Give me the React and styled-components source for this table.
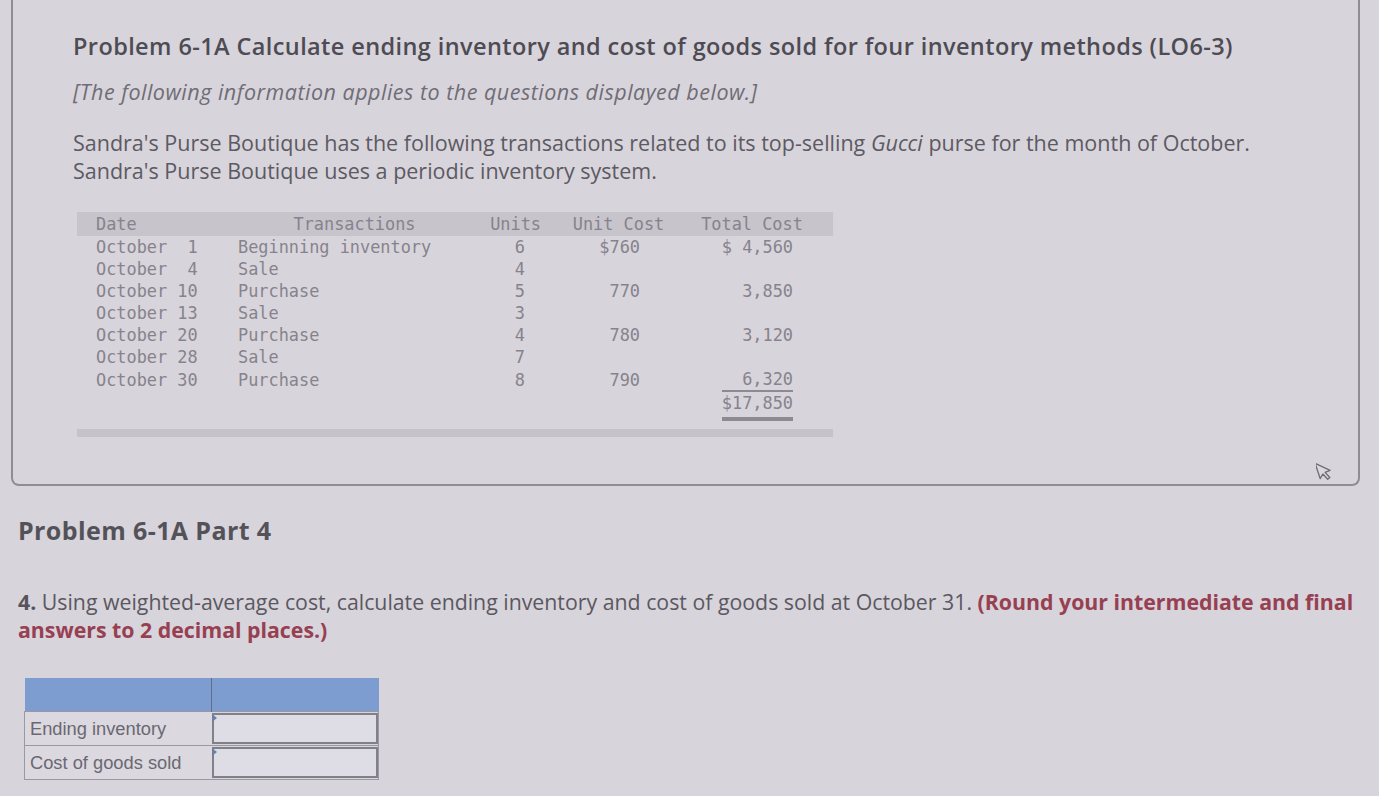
import React from "react";
import styled, { createGlobalStyle } from "styled-components";

const Global = createGlobalStyle`
  html, body { margin: 0; padding: 0; }
  body {
    background: #d8d4dc;
    font-family: "Open Sans", Lato, sans-serif;
    color: #56545b;
  }
`;

const Page = styled.div`
  width: 1379px;
  height: 796px;
  overflow: hidden;
  display: flex;
  flex-direction: column;
  align-items: flex-start;
`;

const InfoBox = styled.section`
  position: relative;
  align-self: stretch;
  margin: 0 19px 0 11px;
  height: 486px;
  box-sizing: border-box;
  border: 2px solid #8e8c94;
  border-top: none;
  border-radius: 0 0 8px 8px;
  padding: 30px 0 0 60px;
`;

const Title = styled.h1`
  margin: 0;
  font-size: 23.5px;
  line-height: 32px;
  font-weight: 600;
  letter-spacing: 0.4px;
  color: #4d4b53;
`;

const Note = styled.p`
  margin: 16px 0 0;
  font-size: 21.5px;
  line-height: 28px;
  letter-spacing: 0.5px;
  font-style: italic;
  color: #6f6d75;
`;

const Para = styled.p`
  margin: 23px 0 0;
  font-size: 21.5px;
  line-height: 28px;
  color: #5c5a62;
`;

const DataTable = styled.div`
  margin: 27px 0 0 4px;
  width: 756px;
  font-family: "DejaVu Sans Mono", "Liberation Mono", monospace;
  font-size: 16.9px;
  color: #86838c;
`;

const Row = styled.div`
  display: grid;
  grid-template-columns: 19px 142px 233px 85px 125px 152px;
  min-height: ${(p) => p.$h || 22}px;
  align-items: center;
  background: ${(p) => (p.$head ? "#c8c4cc" : "transparent")};
  white-space: pre;
`;

const Cell = styled.div`
  text-align: ${(p) => p.$align || "left"};
  padding-right: ${(p) => p.$pr || 0}px;
`;

const Amount = styled.span`
  display: inline-block;
  min-width: 7ch;
  text-align: right;
  line-height: 22px;
  padding-bottom: ${(p) => (p.$line === 4 ? 3 : 0)}px;
  border-bottom: ${(p) => (p.$line ? `${p.$line}px solid #8d8a93` : "none")};
`;

const BottomBar = styled.div`
  margin-top: 8px;
  height: 8px;
  background: #c6c2ca;
`;

const Cursor = styled.svg`
  position: absolute;
  right: 26px;
  bottom: 2px;
`;

const PartTitle = styled.h2`
  margin: 28px 0 0 18px;
  font-size: 25px;
  line-height: 32px;
  font-weight: 700;
  letter-spacing: 0.4px;
  color: #545259;
`;

const Question = styled.p`
  margin: 42px 0 0 18px;
  font-size: 21.3px;
  line-height: 28px;
  color: #5a5860;
  white-space: nowrap;
`;

const Strong = styled.b`
  font-weight: 700;
  color: ${(p) => (p.$accent ? "#964052" : "#56545b")};
`;

const AnswerTable = styled.table`
  margin: 34px 0 0 24px;
  width: 354px;
  table-layout: fixed;
  border-collapse: collapse;
  font-family: "Liberation Sans", Arial, sans-serif;
  font-size: 18.3px;
  color: #6a6870;
`;

const HeadCell = styled.th`
  background: #7d9dd0;
  height: 33px;
  padding: 0;
  border-left: ${(p) => (p.$divider ? "1px solid #5e6f8a" : "none")};
`;

const LabelCell = styled.td`
  height: 31px;
  padding: 0 0 0 5px;
  border: 1px solid #9a98a0;
  border-right: none;
  background: #dbd8e0;
  white-space: nowrap;
  overflow: hidden;
`;

const InputCell = styled.td`
  padding: 0;
  border: 1px solid #9a98a0;
  border-left: none;
  position: relative;
`;

const InputBox = styled.div`
  height: 27px;
  margin: 1px 0;
  border: 2px solid #7f8088;
  background: #dedce4;
`;

const Marker = styled.span`
  position: absolute;
  left: 0;
  top: 2px;
  width: 0;
  height: 0;
  border-top: 4px solid transparent;
  border-bottom: 4px solid transparent;
  border-left: 5px solid #6c7fa6;
`;

const rows = [
  ["October  1", "Beginning inventory", "6", "$760", "$ 4,560"],
  ["October  4", "Sale", "4", "", ""],
  ["October 10", "Purchase", "5", "770", "3,850"],
  ["October 13", "Sale", "3", "", ""],
  ["October 20", "Purchase", "4", "780", "3,120"],
  ["October 28", "Sale", "7", "", ""],
  ["October 30", "Purchase", "8", "790", "6,320"],
];

export default function App() {
  return (
    <Page>
      <Global />
      <InfoBox>
        <Title>
          Problem 6-1A Calculate ending inventory and cost of goods sold for four inventory methods (LO6-3)
        </Title>
        <Note>[The following information applies to the questions displayed below.]</Note>
        <Para>
          Sandra's Purse Boutique has the following transactions related to its top-selling <i>Gucci</i> purse for
          the month of October.
          <br />
          Sandra's Purse Boutique uses a periodic inventory system.
        </Para>
        <DataTable>
          <Row $head $h={24}>
            <Cell />
            <Cell>Date</Cell>
            <Cell $align="center">Transactions</Cell>
            <Cell $align="right" $pr={15}>Units</Cell>
            <Cell $align="center">Unit Cost</Cell>
            <Cell $align="center" $pr={10}>Total Cost</Cell>
          </Row>
          {rows.map((r, i) => (
            <Row key={i}>
              <Cell />
              <Cell>{r[0]}</Cell>
              <Cell>{r[1]}</Cell>
              <Cell $align="right" $pr={31}>{r[2]}</Cell>
              <Cell $align="right" $pr={41}>{r[3]}</Cell>
              <Cell $align="right" $pr={40}>
                <Amount $line={i === rows.length - 1 ? 2 : 0}>{r[4]}</Amount>
              </Cell>
            </Row>
          ))}
          <Row>
            <Cell />
            <Cell />
            <Cell />
            <Cell />
            <Cell />
            <Cell $align="right" $pr={40}>
              <Amount $line={4}>$17,850</Amount>
            </Cell>
          </Row>
          <BottomBar />
        </DataTable>
        <Cursor width="16" height="22" viewBox="0 0 16 22">
          <path
            d="M2 1 L2 17 L6 13.5 L9 20 L11.5 19 L8.6 12.6 L14 12.2 Z"
            fill="#dcd8e0"
            stroke="#6e6c74"
            strokeWidth="1.3"
            strokeLinejoin="round"
            transform="rotate(-18 8 11)"
          />
        </Cursor>
      </InfoBox>

      <PartTitle>Problem 6-1A Part 4</PartTitle>
      <Question>
        <Strong>4.</Strong> Using weighted-average cost, calculate ending inventory and cost of goods sold at October 31.{" "}
        <Strong $accent>(Round your intermediate and final</Strong>
        <br />
        <Strong $accent>answers to 2 decimal places.)</Strong>
      </Question>

      <AnswerTable>
        <colgroup>
          <col style={{ width: 187 }} />
          <col style={{ width: 167 }} />
        </colgroup>
        <thead>
          <tr>
            <HeadCell />
            <HeadCell $divider />
          </tr>
        </thead>
        <tbody>
          <tr>
            <LabelCell>Ending inventory</LabelCell>
            <InputCell>
              <Marker />
              <InputBox />
            </InputCell>
          </tr>
          <tr>
            <LabelCell>Cost of goods sold</LabelCell>
            <InputCell>
              <Marker />
              <InputBox />
            </InputCell>
          </tr>
        </tbody>
      </AnswerTable>
    </Page>
  );
}
